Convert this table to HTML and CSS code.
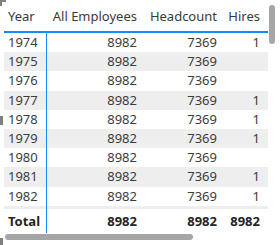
FILE: index.html
```
<!DOCTYPE html>
<html>
<head>
<meta charset="utf-8">
<link rel="stylesheet" href="styles.css">
</head>
<body>
<div class="visual">
  <span class="corner corner-tl"></span>
  <span class="corner corner-ml"></span>
  <span class="corner corner-bl"></span>
  <div class="table">
    <div class="row head">
      <div class="c c1">Year</div>
      <div class="c">All Employees</div>
      <div class="c">Headcount</div>
      <div class="c c4">Hires</div>
    </div>
    <div class="body">
      <div class="row"><div class="c c1">1974</div><div class="c">8982</div><div class="c">7369</div><div class="c c4">1</div></div>
      <div class="row alt"><div class="c c1">1975</div><div class="c">8982</div><div class="c">7369</div><div class="c c4"></div></div>
      <div class="row"><div class="c c1">1976</div><div class="c">8982</div><div class="c">7369</div><div class="c c4"></div></div>
      <div class="row alt"><div class="c c1">1977</div><div class="c">8982</div><div class="c">7369</div><div class="c c4">1</div></div>
      <div class="row"><div class="c c1">1978</div><div class="c">8982</div><div class="c">7369</div><div class="c c4">1</div></div>
      <div class="row alt"><div class="c c1">1979</div><div class="c">8982</div><div class="c">7369</div><div class="c c4">1</div></div>
      <div class="row"><div class="c c1">1980</div><div class="c">8982</div><div class="c">7369</div><div class="c c4"></div></div>
      <div class="row alt"><div class="c c1">1981</div><div class="c">8982</div><div class="c">7369</div><div class="c c4">1</div></div>
      <div class="row"><div class="c c1">1982</div><div class="c">8982</div><div class="c">7369</div><div class="c c4">1</div></div>
      <div class="row alt"><div class="c c1"></div><div class="c"></div><div class="c"></div><div class="c c4"></div></div>
    </div>
    <div class="row total">
      <div class="c c1">Total</div>
      <div class="c">8982</div>
      <div class="c">8982</div>
      <div class="c c4">8982</div>
    </div>
  </div>
  <div class="vscroll"></div>
  <div class="hscroll"></div>
</div>
</body>
</html>
```
FILE: styles.css
```
html, body {
  margin: 0;
  padding: 0;
  background: #ffffff;
}
.visual {
  position: relative;
  width: 280px;
  height: 245px;
  overflow: hidden;
  font-family: "Noto Sans", "Open Sans", sans-serif;
  font-size: 13px;
  color: #3c3c3c;
}
.table {
  margin-left: 4px;
  width: 264px;
  display: flex;
  flex-direction: column;
}
.row {
  display: grid;
  grid-template-columns: 43px 95px 80px 46px;
  height: 19.2px;
  align-items: center;
}
.c {
  text-align: right;
  padding-right: 5px;
  white-space: nowrap;
  line-height: 19.2px;
  height: 100%;
}
.c4 {
  padding-right: 8px;
}
.c1 {
  text-align: left;
  padding-left: 4px;
  padding-right: 0;
  border-right: 1px solid #118dff;
  box-sizing: border-box;
}
.head {
  height: 31px;
  border-bottom: 2px solid #118dff;
}
.head .c {
  line-height: 32px;
  color: #3b3a39;
}
.head .c1 {
  border-right: none;
}
.body {
  height: 176px;
  overflow: hidden;
}
.alt {
  background: #eeeeee;
}
.total {
  height: 24px;
  font-weight: bold;
  color: #252423;
}
.total .c {
  line-height: 24px;
}
.vscroll {
  position: absolute;
  left: 269px;
  top: 5px;
  width: 6px;
  height: 39px;
  border-radius: 3px;
  background: #a6a6a6;
}
.hscroll {
  position: absolute;
  left: 5px;
  top: 234px;
  width: 188px;
  height: 6px;
  border-radius: 3px;
  background: #a6a6a6;
}
.corner {
  position: absolute;
  background: #808080;
}
.corner-tl {
  left: 0;
  top: 0;
  width: 6px;
  height: 6px;
  background: transparent;
  border-left: 2px solid #808080;
  border-top: 2px solid #808080;
  box-sizing: border-box;
}
.corner-ml {
  left: 0;
  top: 116px;
  width: 3px;
  height: 9px;
}
.corner-bl {
  left: 0;
  top: 238px;
  width: 3px;
  height: 7px;
}
```
